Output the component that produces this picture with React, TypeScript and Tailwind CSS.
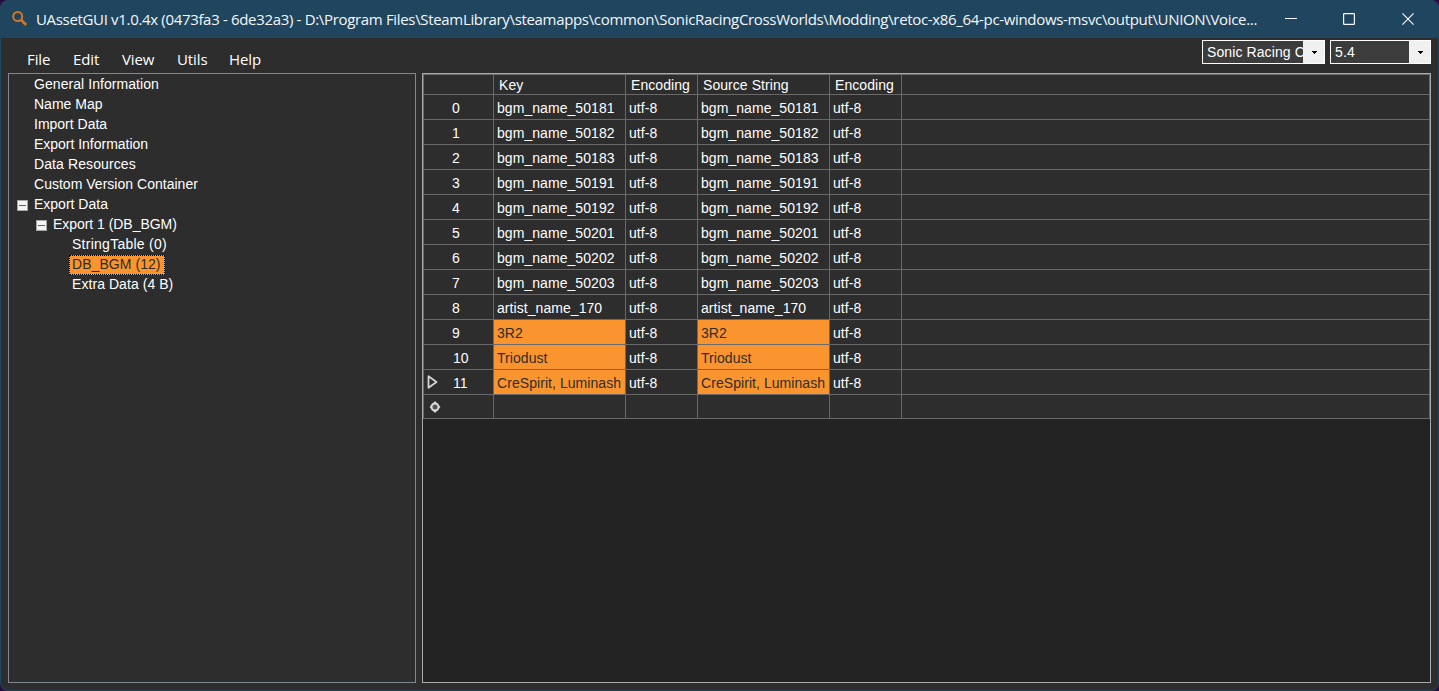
import { clsx } from "clsx";
import { useState } from "react";

type Row = {
  key: string;
  source: string;
  highlighted?: boolean;
};

type TreeNode = {
  label: string;
  level: number;
  expanded?: boolean;
  tracking?: string;
};

const menuItems = [
  { label: "File", width: "w-[46px]" },
  { label: "Edit", width: "w-[49px]" },
  { label: "View", width: "w-[55px]" },
  { label: "Utils", width: "w-[52px]" },
  { label: "Help", width: "w-[50px]" },
];

const treeNodes: TreeNode[] = [
  { label: "General Information", level: 0 },
  { label: "Name Map", level: 0, tracking: "tracking-normal" },
  { label: "Import Data", level: 0, tracking: "tracking-normal" },
  { label: "Export Information", level: 0, tracking: "tracking-[-0.02px]" },
  { label: "Data Resources", level: 0, tracking: "tracking-[0.1px]" },
  {
    label: "Custom Version Container",
    level: 0,
    tracking: "tracking-[0.02px]",
  },
  { label: "Export Data", level: 0, expanded: true, tracking: "tracking-normal" },
  {
    label: "Export 1 (DB_BGM)",
    level: 1,
    expanded: true,
    tracking: "tracking-[-0.04px]",
  },
  { label: "StringTable (0)", level: 2, tracking: "tracking-[0.26px]" },
  { label: "DB_BGM (12)", level: 2, tracking: "tracking-[0.06px]" },
  { label: "Extra Data (4 B)", level: 2 },
];

const rows: Row[] = [
  { key: "bgm_name_50181", source: "bgm_name_50181" },
  { key: "bgm_name_50182", source: "bgm_name_50182" },
  { key: "bgm_name_50183", source: "bgm_name_50183" },
  { key: "bgm_name_50191", source: "bgm_name_50191" },
  { key: "bgm_name_50192", source: "bgm_name_50192" },
  { key: "bgm_name_50201", source: "bgm_name_50201" },
  { key: "bgm_name_50202", source: "bgm_name_50202" },
  { key: "bgm_name_50203", source: "bgm_name_50203" },
  { key: "artist_name_170", source: "artist_name_170" },
  { key: "3R2", source: "3R2", highlighted: true },
  { key: "Triodust", source: "Triodust", highlighted: true },
  {
    key: "CreSpirit, Luminash",
    source: "CreSpirit, Luminash",
    highlighted: true,
  },
];

const columns =
  "grid grid-cols-[70px_132px_72px_132px_72px_1fr] border-b border-[#696969]";
const cell = "overflow-hidden border-r border-[#696969] whitespace-nowrap";

const TitleBar = () => (
  <div className="flex h-[38px] shrink-0 items-center bg-[#20455f] pl-3 text-[#f4f7f9]">
    <svg width="16" height="16" viewBox="0 0 16 16" className="shrink-0">
      <circle
        cx="5.7"
        cy="5.5"
        r="4.5"
        fill="none"
        stroke="#cf7527"
        strokeWidth="2"
      />
      <path d="M9 8.8L14.2 14" stroke="#cf7527" strokeWidth="2.8" />
    </svg>
    <h1 className="ml-2 min-w-0 flex-1 font-['Open_Sans',sans-serif] text-[15px] leading-[38px] tracking-[-0.33px] whitespace-nowrap">
      UAssetGUI v1.0.4x (0473fa3 - 6de32a3) - D:\Program
      Files\SteamLibrary\steamapps\common\SonicRacingCrossWorlds\Modding\retoc-x86_64-pc-windows-msvc\output\UNION\Voice...
    </h1>
    <div className="flex shrink-0 pr-px">
      <button className="flex h-[38px] w-[58px] items-center justify-center">
        <svg width="12" height="12" viewBox="0 0 12 12">
          <path d="M0 5.5H12" stroke="#f4f7f9" />
        </svg>
      </button>
      <button className="flex h-[38px] w-[58px] items-center justify-center">
        <svg width="12" height="12" viewBox="0 0 12 12">
          <rect
            x="0.6"
            y="0.6"
            width="10.8"
            height="10.8"
            rx="0.6"
            fill="none"
            stroke="#f4f7f9"
            strokeWidth="1.2"
          />
        </svg>
      </button>
      <button className="flex h-[38px] w-[60px] items-center justify-center">
        <svg width="12" height="12" viewBox="0 0 12 12">
          <path
            d="M0.4 0.4L11.6 11.6M11.6 0.4L0.4 11.6"
            stroke="#f4f7f9"
            strokeWidth="1.2"
          />
        </svg>
      </button>
    </div>
  </div>
);

const ComboBox = ({ value, width }: { value: string; width: string }) => (
  <div className={clsx("flex h-6 border border-white bg-[#3c3c3c]", width)}>
    <span className="flex-1 overflow-hidden pl-1 text-[14px] leading-[23px] tracking-[0.1px] whitespace-nowrap">
      {value}
    </span>
    <button className="flex w-[21px] shrink-0 items-center justify-center bg-[#f0f0f0] pl-px">
      <svg width="5" height="3" viewBox="0 0 5 3">
        <path d="M0 0H5V1H4V2H3V3H2V2H1V1H0Z" fill="#000" />
      </svg>
    </button>
  </div>
);

const Tree = () => {
  const [selected, setSelected] = useState("DB_BGM (12)");

  return (
    <ul className="w-[408px] shrink-0 border border-[#828790] pt-px">
      {treeNodes.map((node) => (
        <li
          key={node.label}
          className={clsx(
            "flex h-5 items-center",
            node.level === 0 && "pl-2",
            node.level === 1 && "pl-[27px]",
            node.level === 2 && "pl-[46px]",
          )}
        >
          <span className="w-[14px] shrink-0">
            {node.expanded && (
              <svg width="11" height="11" viewBox="0 0 11 11" className="mt-px">
                <rect
                  x="0.5"
                  y="0.5"
                  width="10"
                  height="10"
                  fill="#f4f4f4"
                  stroke="#a5a5a5"
                />
                <path d="M2 5.5H9" stroke="#4b5fa5" />
              </svg>
            )}
          </span>
          <span
            onClick={() => setSelected(node.label)}
            className={clsx(
              "h-5 border pr-[3px] pl-[2px] leading-[17px] whitespace-nowrap",
              node.tracking,
              selected === node.label
                ? "border-dotted border-black bg-[#fa942e] text-[#2d2d2d]"
                : "border-transparent",
            )}
          >
            {node.label}
          </span>
        </li>
      ))}
    </ul>
  );
};

const StringTable = () => (
  <div className="flex-1 border border-[#a9a9a9] bg-[#232323]">
    <div className="border-t border-l border-[#696969] bg-[#2d2d2d]">
      <div className={clsx(columns, "h-5 leading-[21px]")}>
        <div className={cell} />
        <div className={clsx(cell, "pl-[5px]")}>Key</div>
        <div className={clsx(cell, "pl-[5px]")}>Encoding</div>
        <div className={clsx(cell, "pl-[5px]")}>Source String</div>
        <div className={clsx(cell, "pl-[5px]")}>Encoding</div>
        <div className="border-r border-[#696969]" />
      </div>
      {rows.map((row, index) => (
        <div
          key={row.key}
          className={clsx(columns, "h-[25px] leading-[27px]")}
        >
          <div className={clsx(cell, "flex")}>
            <span
              className={clsx(
                "shrink-0 pt-[5px] pl-[3px]",
                index < 10 ? "w-7" : "w-[29px]",
              )}
            >
              {index === rows.length - 1 && (
                <svg width="11" height="14" viewBox="0 0 11 14">
                  <path
                    d="M1.5 1.2V12.8L9.5 7Z"
                    fill="none"
                    stroke="#d4d4d4"
                    strokeWidth="1.8"
                    strokeLinejoin="round"
                  />
                </svg>
              )}
            </span>
            {index}
          </div>
          <div
            className={clsx(
              cell,
              "pl-[3px]",
              row.highlighted && "bg-[#fa942e] text-[#2d2d2d]",
            )}
          >
            {row.key}
          </div>
          <div className={clsx(cell, "pl-[3px]")}>utf-8</div>
          <div
            className={clsx(
              cell,
              "pl-[3px]",
              row.highlighted && "bg-[#fa942e] text-[#2d2d2d]",
            )}
          >
            {row.source}
          </div>
          <div className={clsx(cell, "pl-[3px]")}>utf-8</div>
          <div className="border-r border-[#696969]" />
        </div>
      ))}
      {/* New row placeholder */}
      <div className={clsx(columns, "h-6")}>
        <div className={clsx(cell, "flex items-center pl-[5px]")}>
          <svg width="12" height="12" viewBox="0 0 12 12">
            <circle
              cx="6"
              cy="6"
              r="3.5"
              fill="#555"
              stroke="#dcdcdc"
              strokeWidth="2"
            />
            <path
              d="M6 0L8.5 3H3.5ZM6 12L3.5 9H8.5ZM0.5 6L3 4V8ZM11.5 6L9 8V4Z"
              fill="#dcdcdc"
            />
          </svg>
        </div>
        <div className={cell} />
        <div className={cell} />
        <div className={cell} />
        <div className={cell} />
        <div className="border-r border-[#696969]" />
      </div>
    </div>
  </div>
);

const App = () => {
  return (
    <div className="h-[691px] w-[1439px] overflow-hidden bg-[#2a0a45]">
      <div className="flex h-full flex-col overflow-hidden rounded-lg bg-[#2d2d2d] font-['Liberation_Sans',Arial,sans-serif] text-[14px] tracking-[0.06px] text-white">
        <TitleBar />
        <div className="flex min-h-0 flex-1 flex-col rounded-b-lg border-x border-b border-[#20455f] px-[7px] pb-[7px]">
          <div className="flex h-[35px] shrink-0 items-start justify-between">
            <nav className="flex pt-[10px] pl-[19px] font-['Open_Sans',sans-serif] text-[15px] leading-[22px] tracking-[-0.1px]">
              {menuItems.map((item) => (
                <button
                  key={item.label}
                  className={clsx("text-left", item.width)}
                >
                  {item.label}
                </button>
              ))}
            </nav>
            <div className="flex gap-[5px] pt-[2px]">
              <ComboBox value="Sonic Racing C" width="w-[123px]" />
              <ComboBox value="5.4" width="w-[101px]" />
            </div>
          </div>
          <div className="flex min-h-0 flex-1 gap-[6px]">
            <Tree />
            <StringTable />
          </div>
        </div>
      </div>
    </div>
  );
};

export default App;
